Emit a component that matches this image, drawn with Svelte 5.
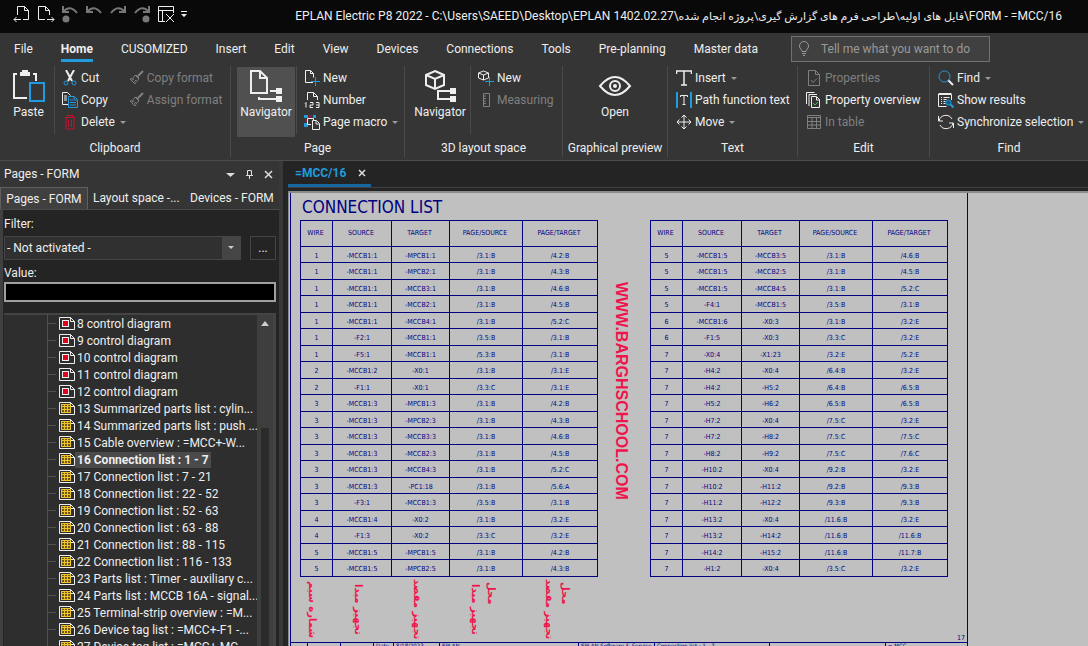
<script lang="ts">
	type Item = { label: string; icon: string; off?: boolean; arrow?: boolean };
	type Group = { name: string; big?: { label: string; icon: string; on?: boolean }; cols: Item[][] };

	const menu = ['File', 'Home', 'CUSOMIZED', 'Insert', 'Edit', 'View', 'Devices', 'Connections', 'Tools', 'Pre-planning', 'Master data'];
	let current = $state('Home');

	const groups: Group[] = [
		{
			name: 'Clipboard',
			big: { label: 'Paste', icon: 'paste' },
			cols: [
				[
					{ label: 'Cut', icon: 'cut' },
					{ label: 'Copy', icon: 'copy' },
					{ label: 'Delete', icon: 'delete', arrow: true }
				],
				[
					{ label: 'Copy format', icon: 'brush', off: true },
					{ label: 'Assign format', icon: 'brush', off: true }
				]
			]
		},
		{
			name: 'Page',
			big: { label: 'Navigator', icon: 'pagenav', on: true },
			cols: [
				[
					{ label: 'New', icon: 'newpage' },
					{ label: 'Number', icon: 'number' },
					{ label: 'Page macro', icon: 'macro', arrow: true }
				]
			]
		},
		{
			name: '3D layout space',
			big: { label: 'Navigator', icon: 'cubenav' },
			cols: [
				[
					{ label: 'New', icon: 'newcube' },
					{ label: 'Measuring', icon: 'ruler', off: true }
				]
			]
		},
		{ name: 'Graphical preview', big: { label: 'Open', icon: 'eye' }, cols: [] },
		{
			name: 'Text',
			cols: [
				[
					{ label: 'Insert', icon: 'text', arrow: true },
					{ label: 'Path function text', icon: 'pathtext' },
					{ label: 'Move', icon: 'move', arrow: true }
				]
			]
		},
		{
			name: 'Edit',
			cols: [
				[
					{ label: 'Properties', icon: 'props', off: true },
					{ label: 'Property overview', icon: 'overview' },
					{ label: 'In table', icon: 'grid', off: true }
				]
			]
		},
		{
			name: 'Find',
			cols: [
				[
					{ label: 'Find', icon: 'find', arrow: true },
					{ label: 'Show results', icon: 'results' },
					{ label: 'Synchronize selection', icon: 'sync', arrow: true }
				]
			]
		}
	];

	const pages = [
		'8 control diagram',
		'9 control diagram',
		'10 control diagram',
		'11 control diagram',
		'12 control diagram',
		'13 Summarized parts list : cylin...',
		'14 Summarized parts list : push ...',
		'15 Cable overview : =MCC+-W...',
		'16 Connection list : 1 - 7',
		'17 Connection list : 7 - 21',
		'18 Connection list : 22 - 52',
		'19 Connection list : 52 - 63',
		'20 Connection list : 63 - 88',
		'21 Connection list : 88 - 115',
		'22 Connection list : 116 - 133',
		'23 Parts list : Timer - auxiliary c...',
		'24 Parts list : MCCB 16A - signal...',
		'25 Terminal-strip overview : =M...',
		'26 Device tag list : =MCC+-F1 -...',
		'27 Device tag list : =MCC+-MC...'
	];
	let selected = $state(8);

	const heads = ['WIRE', 'SOURCE', 'TARGET', 'PAGE/SOURCE', 'PAGE/TARGET'];

	const left = `1 -MCCB1:1 -MPCB1:1 /3.1:B /4.2:B
1 -MCCB1:1 -MPCB2:1 /3.1:B /4.3:B
1 -MCCB1:1 -MCCB3:1 /3.1:B /4.6:B
1 -MCCB1:1 -MCCB2:1 /3.1:B /4.5:B
1 -MCCB1:1 -MCCB4:1 /3.1:B /5.2:C
1 -F2:1 -MCCB1:1 /3.5:B /3.1:B
1 -F5:1 -MCCB1:1 /5.3:B /3.1:B
2 -MCCB1:2 -X0:1 /3.1:B /3.1:E
2 -F1:1 -X0:1 /3.3:C /3.1:E
3 -MCCB1:3 -MPCB1:3 /3.1:B /4.2:B
3 -MCCB1:3 -MPCB2:3 /3.1:B /4.3:B
3 -MCCB1:3 -MCCB3:3 /3.1:B /4.6:B
3 -MCCB1:3 -MCCB2:3 /3.1:B /4.5:B
3 -MCCB1:3 -MCCB4:3 /3.1:B /5.2:C
3 -MCCB1:3 -PC1:18 /3.1:B /5.6:A
3 -F3:1 -MCCB1:3 /3.5:B /3.1:B
4 -MCCB1:4 -X0:2 /3.1:B /3.2:E
4 -F1:3 -X0:2 /3.3:C /3.2:E
5 -MCCB1:5 -MPCB1:5 /3.1:B /4.2:B
5 -MCCB1:5 -MPCB2:5 /3.1:B /4.3:B`;

	const right = `5 -MCCB1:5 -MCCB3:5 /3.1:B /4.6:B
5 -MCCB1:5 -MCCB2:5 /3.1:B /4.5:B
5 -MCCB1:5 -MCCB4:5 /3.1:B /5.2:C
5 -F4:1 -MCCB1:5 /3.5:B /3.1:B
6 -MCCB1:6 -X0:3 /3.1:B /3.2:E
6 -F1:5 -X0:3 /3.3:C /3.2:E
7 -X0:4 -X1:23 /3.2:E /5.2:E
7 -H4:2 -X0:4 /6.4:B /3.2:E
7 -H4:2 -H5:2 /6.4:B /6.5:B
7 -H5:2 -H6:2 /6.5:B /6.5:B
7 -H7:2 -X0:4 /7.5:C /3.2:E
7 -H7:2 -H8:2 /7.5:C /7.5:C
7 -H8:2 -H9:2 /7.5:C /7.6:C
7 -H10:2 -X0:4 /9.2:B /3.2:E
7 -H10:2 -H11:2 /9.2:B /9.3:B
7 -H11:2 -H12:2 /9.3:B /9.3:B
7 -H13:2 -X0:4 /11.6:B /3.2:E
7 -H13:2 -H14:2 /11.6:B /11.6:B
7 -H14:2 -H15:2 /11.6:B /11.7:B
7 -H1:2 -X0:4 /3.5:C /3.2:E`;

	const rows = (text: string) => text.split('\n').map((line) => line.split(' '));

	const notes = [['شماره سیم'], ['تجهیز مبدا'], ['تجهیز مقصد'], ['محل', 'تجهیز مبدا'], ['محل', 'تجهیز مقصد']];
	const stamp = ['', '', '', 'Date', '8/18/2023', 'EPLAN', 'EPLAN Software & Service', 'Connection list : 1 - 7', '', '= MCC'];
</script>

{#snippet icon(name: string)}
	{#if name === 'paste'}
		<svg width="34" height="34" viewBox="0 0 34 34" fill="none" stroke="#eee" stroke-width="2">
			<path d="M5 5H2V29H15M21 5H24V12" />
			<path d="M8 3h2V1h6v2h2v4H8z" fill="#eee" stroke="none" />
			<rect x="18" y="14" width="14" height="18" stroke="#1f9bde" />
		</svg>
	{:else if name === 'pagenav'}
		<svg width="34" height="34" viewBox="0 0 34 34" fill="none" stroke="#eee" stroke-width="2">
			<path d="M2 2h9l7 7v15H2zM11 2v7h7" />
			<path d="M21 22h7M10 28v2h18" />
			<path d="M27 19h6v6h-6zM27 27h6v6h-6z" fill="#eee" stroke="none" />
		</svg>
	{:else if name === 'cubenav'}
		<svg width="34" height="34" viewBox="0 0 34 34" fill="none" stroke="#eee" stroke-width="2">
			<path d="M12 2l9 4v10l-9 4-9-4V6zM3 6l9 4 9-4M12 10v10" />
			<path d="M28 22H15v8h13" />
			<path d="M27 19h6v6h-6zM27 27h6v6h-6z" fill="#eee" stroke="none" />
		</svg>
	{:else if name === 'eye'}
		<svg width="34" height="34" viewBox="0 0 34 34" fill="none" stroke="#eee" stroke-width="2">
			<path d="M2 17Q17-1 32 17Q17 35 2 17z" />
			<circle cx="17" cy="17" r="5" />
			<circle cx="17" cy="17" r="2" fill="#eee" stroke="none" />
		</svg>
	{:else}
		<svg width="16" height="16" viewBox="0 0 16 16" fill="none" stroke="currentColor">
			{#if name === 'cut'}
				<path d="M4 0l6 11M12 0L6 11" stroke-width="2" />
				<circle cx="4" cy="13" r="2" stroke="#1f9bde" />
				<circle cx="12" cy="13" r="2" stroke="#1f9bde" />
			{:else if name === 'copy'}
				<path d="M6 12.500H.5V.5h5l3 3M2 4h3M2 6h3M2 8h3" />
				<path d="M6.500 4.500h6l3 3v8h-9zM12 5v3h3M8 8h3M8 10.500h6M8 13h6" stroke="#1f9bde" />
			{:else if name === 'delete'}
				<path d="M2.500 3.500h11M5.500 3V1.500h5V3M4 4v11h8V4M6.500 6v7M9.500 6v7" stroke="#c8102e" />
			{:else if name === 'brush'}
				<path d="M15 1l-5 5" stroke-width="2" />
				<path d="M2 9c3 0 4-2 5-4l4 4c-2 1-3 3-4 5zM4 10l2-1M6 12l2-2M8 5l3 3" />
			{:else if name === 'newpage'}
				<path d="M9 12.500H1.500V.5h5l3 3v4M6.500.5v3h3" />
				<path d="M11.500 7v9M7 11.500h9" stroke="#1f9bde" />
			{:else if name === 'number'}
				<path d="M3.500 8V.5h6l4 4V8M9.500.5v4h4" />
				<path d="M1 11.500l1-1v5M6 10.500h3v2.500H6v2.500h3M12 10.500h3v5h-3M12 13h3" />
			{:else if name === 'macro'}
				<path d="M0 1h4v3H0zM9 1h3v3H9zM0 9h4v4H0z" fill="#1f9bde" stroke="none" />
				<path d="M5 1v4M7 1v4M2 5v3" stroke="#c8102e" />
				<path d="M7 10.500H3.500V4.500h6V6M8.500 6.500h4l3 3v6h-7zM12 7v3h3" />
			{:else if name === 'newcube'}
				<path d="M5.500 1l5 2v5l-5 2-5-2V3zM.5 3l5 2 5-2M5.500 5v5" />
				<path d="M11.500 7v9M7 11.500h9" stroke="#1f9bde" />
			{:else if name === 'ruler'}
				<path d="M5.500 1.500h6v13h-6zM6 4h2M6 6.500h2M6 9h2M6 11.500h2" />
			{:else if name === 'text'}
				<path d="M.5 4V1h15v3M8 1v14M5 15h6" stroke-width="1.500" />
			{:else if name === 'pathtext'}
				<path d="M1 0v16M15 0v16" stroke="#1f9bde" stroke-width="2" />
				<path d="M4.500 5V3.500h7V5M8 3.500v9M6.500 12.500h3" />
			{:else if name === 'move'}
				<path d="M8 1v14M1 8h14M5.500 3.500L8 1l2.500 2.500M5.500 12.500L8 15l2.500-2.500M3.500 5.500L1 8l2.500 2.500M12.500 5.500L15 8l-2.500 2.500" />
			{:else if name === 'props'}
				<path d="M2.500.5h7l4 4v11h-11zM9.500.5v4h4M5 10l2 2.500 4-4" />
			{:else if name === 'overview'}
				<path d="M.5 12V.5h8M3 14V2.500h8M5.500 4.500h5l3 3v8h-8zM10.500 5v3h3" />
				<path d="M7 11l2 2 3-3" stroke="#4cb04c" />
			{:else if name === 'grid'}
				<path d="M1.500 1.500h13v13h-13zM1.500 3.500h13M1.500 7.500h13M1.500 11h13M6 3.500v11M10.500 3.500v11" />
			{:else if name === 'find'}
				<path d="M10 10l5 5" stroke-width="2" />
				<circle cx="6.500" cy="6.500" r="5.500" stroke="#1f9bde" />
			{:else if name === 'results'}
				<path d="M.5 2.500h13V8M.5 2v12.500h8M.5 1.500h13" />
				<path d="M3 5.500h1M3 7.500h1M3 9.500h1M3 11.500h1M5.500 5.500h6M5.500 7.500h3M5.500 9.500h2M5.500 11.500h2" />
				<path d="M12.500 12.500l3 3" stroke="#1f9bde" stroke-width="2" />
				<circle cx="10.500" cy="10.500" r="2.500" stroke="#1f9bde" fill="#155a85" />
			{:else if name === 'sync'}
				<path d="M1 7a7 7 0 0 1 13-2M15 9a7 7 0 0 1-13 2M.5 2v5H5M15.500 14V9H11" />
			{/if}
		</svg>
	{/if}
{/snippet}

{#snippet list(data: string[][])}
	<table class="list">
		<colgroup><col class="wire" /><col class="dev" /><col class="target" /><col class="src" /><col /></colgroup>
		<thead>
			<tr>
				{#each heads as head}<th>{head}</th>{/each}
			</tr>
		</thead>
		<tbody>
			{#each data as row}
				<tr>
					{#each row as cell}<td>{cell}</td>{/each}
				</tr>
			{/each}
		</tbody>
	</table>
{/snippet}

<div class="app">
	<header class="titlebar">
		<div class="quick">
			<button aria-label="Previous page">
				<svg width="18" height="18" viewBox="0 0 18 18" fill="none" stroke="#eee"><path d="M4.500 10V1.500h7l4 4v9H10M11.500 1.500v4h4M8 14.500H1M3.500 12L1 14.500 3.500 17" /></svg>
			</button>
			<button aria-label="Next page">
				<svg width="18" height="18" viewBox="0 0 18 18" fill="none" stroke="#eee"><path d="M8 14.500H1.500v-13h7l4 4V10M8.500 1.500v4h4M10 14.500h7M14.500 12l2.500 2.500-2.500 2.500" /></svg>
			</button>
			<button aria-label="Undo list">
				<svg width="18" height="18" viewBox="0 0 18 18" fill="none" stroke="#777" stroke-width="2"><path d="M2 1v6h6M2 7Q9-1 16 8" /><circle cx="5" cy="14" r="3.500" fill="#777" stroke="none" /></svg>
			</button>
			<button aria-label="Undo">
				<svg width="18" height="18" viewBox="0 0 18 18" fill="none" stroke="#777" stroke-width="2"><path d="M2 1v6h6M2 7Q9-1 16 8" /></svg>
			</button>
			<button aria-label="Redo">
				<svg width="18" height="18" viewBox="0 0 18 18" fill="none" stroke="#777" stroke-width="2"><path d="M16 1v6h-6M16 7Q9-1 2 8" /></svg>
			</button>
			<button aria-label="Redo list">
				<svg width="18" height="18" viewBox="0 0 18 18" fill="none" stroke="#777" stroke-width="2"><path d="M16 1v6h-6M16 7Q9-1 2 8" /><circle cx="13" cy="14" r="3.500" fill="#777" stroke="none" /></svg>
			</button>
			<button aria-label="Close project">
				<svg width="18" height="18" viewBox="0 0 18 18" fill="none" stroke="#eee"><path d="M8 16.500H1.500v-15h15V8M1.500 5.500h15M5.500 5.500v11M9 9l8 8M17 9l-8 8" /></svg>
			</button>
			<button class="more" aria-label="Customize toolbar">
				<svg width="6" height="6" viewBox="0 0 6 6" fill="#eee"><path d="M0 0h6v1H0zM0 3h6L3 6z" /></svg>
			</button>
		</div>
		<div class="title">EPLAN Electric P8 2022 - C:\Users\SAEED\Desktop\EPLAN 1402.02.27\<span lang="fa">فایل های اولیه\طراحی فرم های گزارش گیری\پروژه انجام شده</span>\FORM - =MCC/16</div>
	</header>

	<nav class="menu">
		{#each menu as name}
			<button class:active={name === current} onclick={() => (current = name)}><span>{name}</span></button>
		{/each}
		<label class="tell">
			<svg width="12" height="16" viewBox="0 0 12 16" fill="none" stroke="#999"><path d="M4 10.500C4 8.500 1.500 8 1.500 5a4.500 4.500 0 0 1 9 0c0 3-2.500 3.500-2.500 5.500zM4 12.500h4M5 14.500h2" /></svg>
			<input type="text" placeholder="Tell me what you want to do" aria-label="Tell me what you want to do" />
		</label>
	</nav>

	<div class="ribbon">
		{#each groups as group}
			<section class="group">
				<div class="tools" class:center={group.cols.length === 0}>
					{#if group.big}
						<button class="big" class:on={group.big.on}>
							{@render icon(group.big.icon)}
							<span>{group.big.label}</span>
						</button>
					{/if}
					{#each group.cols as col, i}
						<div class="col" class:first={group.big && i === 0}>
							{#each col as item}
								<button class="small" disabled={item.off}>
									{@render icon(item.icon)}
									<span>{item.label}</span>
									{#if item.arrow}<i class="arrow"></i>{/if}
								</button>
							{/each}
						</div>
					{/each}
				</div>
				<h2>{group.name}</h2>
			</section>
		{/each}
	</div>

	<div class="work">
		<aside class="panel">
			<div class="panel-head">
				<span>Pages - FORM</span>
				<button aria-label="Menu"><svg width="9" height="9" viewBox="0 0 9 9" fill="#ddd"><path d="M0 3h9L4.500 7z" /></svg></button>
				<button aria-label="Pin"><svg width="9" height="9" viewBox="0 0 9 9" fill="none" stroke="#ddd"><path d="M2.500 5V.5h4V5M1 5.500h7M4.500 6v3" /></svg></button>
				<button aria-label="Close"><svg width="9" height="9" viewBox="0 0 9 9" stroke="#ddd" stroke-width="1.500"><path d="M1 1l7 7M8 1L1 8" /></svg></button>
			</div>
			<div class="panel-tabs">
				<button class="active">Pages - FORM</button>
				<button>Layout space -...</button>
				<button>Devices - FORM</button>
			</div>
			<div class="panel-body">
				<label for="filter">Filter:</label>
				<div class="filter">
					<div class="combo">
						<select id="filter"><option>- Not activated -</option></select>
						<svg width="18" height="22" viewBox="0 0 18 22"><path d="M0 0h18v22H0z" fill="#454545" /><path d="M6 9h6l-3 3z" fill="#ccc" /></svg>
					</div>
					<button aria-label="Edit filter">...</button>
				</div>
				<label for="value">Value:</label>
				<input id="value" type="text" />
				<div class="tree-box">
					<ul class="tree">
						{#each pages as page, i}
							<li>
								<svg width="16" height="13" viewBox="0 0 16 13" fill="none" stroke="#eee">
									<path d="M.5.5h11l4 4v8H.5zM11.500.5v4h4" />
									{#if i < 5}
										<rect x="3.500" y="3.500" width="6" height="6" fill="#e00020" />
									{:else}
										<path d="M2 2h10v9H2z" fill="#f0c428" stroke="none" />
										<path d="M3 3h2v1H3zM6 3h2v1H6zM9 3h2v1H9zM3 5h2v2H3zM6 5h2v2H6zM9 5h2v2H9zM3 8h2v2H3zM6 8h2v2H6zM9 8h2v2H9z" fill="#6a571c" stroke="none" />
									{/if}
								</svg>
								<button class:selected={i === selected} onclick={() => (selected = i)}>{page}</button>
							</li>
						{/each}
					</ul>
					<div class="scroll"><i></i><b></b></div>
				</div>
			</div>
		</aside>

		<main>
			<div class="docs">
				<button>=MCC/16</button>
				<button class="close" aria-label="Close =MCC/16"><svg width="8" height="8" viewBox="0 0 8 8" stroke="#ddd" stroke-width="1.500"><path d="M1 1l6 6M7 1L1 7" /></svg></button>
			</div>
			<div class="canvas">
				<article class="sheet">
					<h1>CONNECTION LIST</h1>
					<div class="lists">
						{@render list(rows(left))}
						<p class="site">WWW.BARGHSCHOOL.COM</p>
						{@render list(rows(right))}
					</div>
					<div class="foot">
						<div class="notes" lang="fa">
							{#each notes as lines}
								<p>{#each lines as line}<span>{line}</span>{/each}</p>
							{/each}
						</div>
						<span class="num">17</span>
					</div>
					<div class="stamp">
						{#each stamp as cell}<span>{cell}</span>{/each}
					</div>
				</article>
			</div>
		</main>
	</div>
</div>

<style>
	:global(body) {
		margin: 0;
		overflow: hidden;
	}

	.app {
		display: flex;
		flex-direction: column;
		height: 100vh;
		background: #353535;
		color: #eee;
		font: 12px/16px Roboto, 'DejaVu Sans', sans-serif;
	}

	button,
	input,
	select {
		font: inherit;
		color: inherit;
		background: none;
		border: none;
		padding: 0;
		margin: 0;
		white-space: nowrap;
	}

	svg {
		display: block;
		flex: none;
	}

	.titlebar {
		display: flex;
		align-items: center;
		justify-content: space-between;
		height: 33px;
		flex: none;
		padding: 0 26px 0 13px;
		background: #090909;
	}

	.quick {
		display: flex;
		align-items: center;
		gap: 6px;
		padding-bottom: 6px;
	}

	.title {
		white-space: nowrap;
	}

	.title span {
		font-size: 11px;
	}

	.menu {
		display: flex;
		flex: none;
		height: 33px;
	}

	.menu button {
		padding: 2px 14px 0;
		height: 30px;
	}

	.menu span {
		display: block;
		padding: 5px 0 2px;
		border-bottom: 3px solid transparent;
	}

	.menu .active span {
		font-weight: bold;
		border-color: #1f9bde;
	}

	.tell {
		display: flex;
		align-items: center;
		gap: 11px;
		width: 191px;
		height: 24px;
		margin: 3px 98px 0 auto;
		padding-left: 6px;
		border: 1px solid #707070;
		background: #404040;
	}

	.tell input {
		flex: 1;
		min-width: 0;
	}

	.tell input::placeholder {
		color: #999;
		opacity: 1;
	}

	.ribbon {
		display: grid;
		grid-template-columns: 231px 174px 158px 105px 130px 132px 1fr;
		flex: none;
		height: 94px;
		border-bottom: 1px solid #4c4c4c;
	}

	.group {
		border-right: 1px solid #4a4a4a;
		margin-bottom: 3px;
	}

	.group:last-child {
		border-right: none;
	}

	.tools {
		display: flex;
		height: 72px;
		padding-left: 6px;
	}

	.group:first-child .tools {
		padding-left: 0;
	}

	.center {
		justify-content: center;
		padding: 0;
	}

	.big {
		display: flex;
		flex-direction: column;
		align-items: center;
		gap: 1px;
		width: 58px;
		height: 70px;
		margin-top: 1px;
		padding-top: 2px;
	}

	.group:first-child .big {
		width: 53px;
		padding-left: 4px;
	}

	.on {
		background: #505050;
	}

	.col {
		display: flex;
		flex-direction: column;
		align-items: flex-start;
		padding: 1px 0 0 2px;
	}

	.first {
		border-left: 1px solid #4a4a4a;
		margin: 0 0 4px 1px;
		padding-left: 7px;
	}

	.small {
		display: flex;
		align-items: center;
		gap: 3px;
		height: 22px;
	}

	.small:disabled {
		color: #808080;
	}

	.arrow {
		width: 0;
		border: 3px solid transparent;
		border-top-color: #999;
		border-bottom: none;
		margin-left: 2px;
	}

	h2 {
		margin: 2px 0 0;
		font-size: 12px;
		font-weight: normal;
		text-align: center;
		white-space: nowrap;
	}

	.work {
		display: flex;
		flex: 1;
		min-height: 0;
	}

	.panel {
		display: flex;
		flex-direction: column;
		width: 279px;
		flex: none;
	}

	.panel-head {
		display: flex;
		align-items: center;
		gap: 10px;
		height: 26px;
		padding: 0 6px 0 4px;
	}

	.panel-head span {
		flex: 1;
	}

	.panel-tabs {
		display: flex;
		height: 22px;
		border-bottom: 1px solid #4a4a4a;
	}

	.panel-tabs button {
		flex: auto;
		padding: 0 4px;
	}

	.panel-tabs .active {
		border: 1px solid #606060;
		border-bottom: none;
		background: #404040;
	}

	.panel-body {
		display: flex;
		flex-direction: column;
		flex: 1;
		min-height: 0;
		padding: 6px 3px 0 1px;
		border-left: 3px solid #404040;
		background: #242424;
	}

	.filter {
		display: flex;
		gap: 9px;
		height: 24px;
		margin: 4px 0 5px;
	}

	.combo {
		display: flex;
		flex: 1;
		align-items: center;
		border: 1px solid #454545;
		background: #303030;
	}

	.combo select {
		flex: 1;
		height: 22px;
		padding-left: 2px;
		appearance: none;
	}

	.filter button {
		width: 26px;
		border: 1px solid #454545;
	}

	#value {
		height: 20px;
		box-sizing: border-box;
		margin-top: 1px;
		border: 2px solid #a0a0a0;
		background: #000;
	}

	.tree-box {
		display: flex;
		flex: 1;
		min-height: 0;
		margin-top: 11px;
		border-top: 2px solid #444;
		border-right: 3px solid #444;
		background: #2e2e2e;
	}

	.tree {
		flex: 1;
		min-width: 0;
		margin: 0 0 0 43px;
		padding: 0;
		list-style: none;
		border-left: 1px solid #505050;
		overflow: hidden;
	}

	.tree li {
		display: flex;
		align-items: center;
		height: 17px;
	}

	.tree li::before {
		content: '';
		flex: none;
		width: 8px;
		margin-right: 3px;
		border-top: 1px solid #505050;
	}

	.tree button {
		flex: none;
		height: 16px;
		padding-left: 2px;
	}

	.tree .selected {
		padding-right: 2px;
		background: #4a4a4a;
		font-weight: bold;
	}

	.scroll {
		display: flex;
		flex-direction: column;
		align-items: center;
		width: 16px;
		background: #3e3e3e;
	}

	.scroll i {
		border: 4px solid transparent;
		border-top: none;
		border-bottom: 5px solid #ccc;
		margin: 6px 0 102px;
	}

	.scroll b {
		flex: 1;
		width: 8px;
		background: #2b2b2b;
	}

	main {
		display: flex;
		flex-direction: column;
		flex: 1;
		min-width: 0;
		border-left: 4px solid #383838;
		padding-left: 5px;
		background: #242424;
	}

	.docs {
		display: flex;
		align-items: center;
		height: 26px;
		flex: none;
		border-bottom: 1px solid #404040;
	}

	.docs button {
		height: 26px;
		box-sizing: border-box;
		padding: 0 0 0 7px;
		color: #1f9bde;
		font-weight: bold;
		border-bottom: 3px solid #1669a0;
	}

	.docs .close {
		padding: 0 5px 0 12px;
	}

	.canvas {
		flex: 1;
		min-height: 0;
		margin-top: 3px;
		padding-left: 1px;
		border-top: 2px solid #8a8a8a;
		border-left: 1px solid #8a8a8a;
		background: #c0c0c0;
		color: #000080;
		font-family: 'DejaVu Sans Condensed', 'DejaVu Sans', sans-serif;
		font-size: 7px;
		line-height: 8px;
		overflow: hidden;
	}

	.sheet {
		width: max-content;
		border-left: 1px solid #000080;
		border-right: 1px solid #000080;
	}

	h1 {
		margin: 0 0 0 11px;
		padding: 4px 0 2px;
		font-size: 17px;
		line-height: 21px;
		font-weight: normal;
	}

	.lists {
		display: flex;
		padding: 0 19px 0 9px;
	}

	.list {
		width: 298px;
		table-layout: fixed;
		border-collapse: collapse;
		text-align: center;
	}

	.wire {
		width: 32px;
	}

	.dev {
		width: 59px;
	}

	.target {
		width: 58px;
	}

	.src {
		width: 73px;
	}

	.list th,
	.list td {
		height: 16px;
		box-sizing: border-box;
		padding: 2px 0 0;
		font-weight: normal;
		border: 1px solid #000080;
	}

	.list th {
		height: 26px;
		padding: 0 2px 2px 0;
	}

	.list tr:nth-child(even) td {
		height: 17px;
	}

	.site {
		width: 52px;
		margin: 0;
		padding: 62px 6px 0 0;
		box-sizing: border-box;
		writing-mode: vertical-rl;
		font: bold 16px/46px 'Liberation Sans', sans-serif;
		color: #f0144c;
	}

	.foot {
		display: flex;
		align-items: flex-end;
		justify-content: space-between;
		height: 65px;
		padding: 0 2px 0 5px;
	}

	.notes {
		display: grid;
		grid-template-columns: 32px 59px 59px 73px 75px;
		height: 65px;
	}

	.notes p {
		display: flex;
		flex-direction: column;
		justify-content: center;
		align-items: center;
		margin: 0;
		writing-mode: vertical-rl;
		direction: rtl;
		font: bold 10px/16px 'DejaVu Sans', sans-serif;
		color: #f0144c;
		white-space: nowrap;
	}

	/* first of two lines starts level with the head of the second */
	.notes span:first-child:not(:last-child) {
		align-self: flex-end;
		margin-top: 5px;
	}

	.stamp {
		display: grid;
		grid-template-columns: 17px 33px 33px 20px 46px 139px 76px 115px 116px 1fr;
		border-top: 1px solid #000080;
		font-size: 6px;
	}

	.stamp span {
		height: 20px;
		padding-left: 2px;
		border-right: 1px solid #000080;
		line-height: 6px;
		overflow: hidden;
	}

	.stamp span:last-child {
		border-right: none;
	}
</style>
